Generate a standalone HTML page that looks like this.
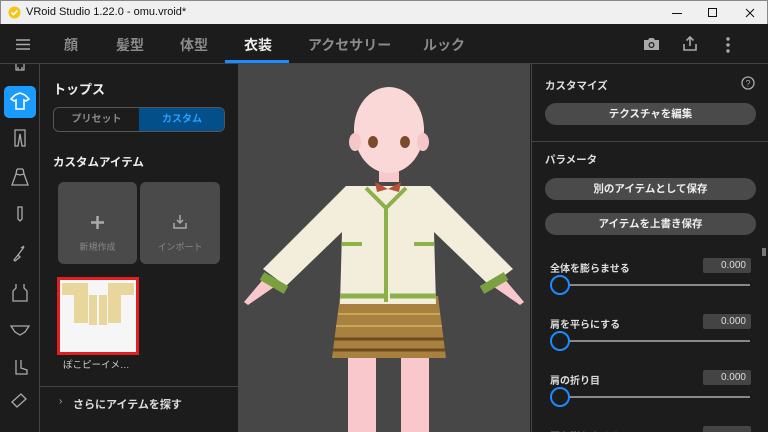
<!DOCTYPE html>
<html><head><meta charset="utf-8"><style>
*{margin:0;padding:0;box-sizing:border-box}
html,body{width:768px;height:432px;overflow:hidden}
body{background:#1c1c1c;font-family:"Liberation Sans","Noto Sans CJK JP",sans-serif;position:relative;color:#ddd}
.abs{position:absolute}
#title{left:0;top:0;width:768px;height:24px;background:#f0f0f0;border:1px solid #888;border-bottom:none}
#title span{position:absolute;left:25px;top:5px;font-size:11px;color:#111}
#nav{left:0;top:24px;width:768px;height:40px;background:#1c1c1c;border-bottom:1px solid #444}
.tab{position:absolute;top:11px;font-size:14px;font-weight:bold;color:#8a8a8a}
#rail{left:0;top:64px;width:40px;height:368px;border-right:1px solid #444}
#lp{left:40px;top:64px;width:198px;height:368px;background:#1c1c1c;overflow:hidden}
#vp{left:238px;top:64px;width:292px;height:368px;background:#474747}
#rp{left:531px;top:64px;width:237px;height:368px;background:#1c1c1c;border-left:1px solid #444;overflow:hidden}
.btn{position:absolute;left:13px;width:211px;height:22px;border-radius:11px;background:#4a4a4a;color:#eee;font-size:10.5px;font-weight:bold;text-align:center;line-height:22px}
.lab{position:absolute;left:18px;font-size:10px;font-weight:bold;color:#ddd}
.val{position:absolute;left:171px;width:48px;height:15px;background:#444;border-radius:2px;font-size:10px;color:#ddd;text-align:right;padding-right:5px;line-height:15px}
.trk{position:absolute;left:28px;width:190px;height:2px;background:#888}
.knob{position:absolute;left:18px;width:20px;height:20px;border:2px solid #1a8cff;border-radius:50%;background:#1c1c1c}
</style></head><body>
<div id="title" class="abs">
<svg class="abs" style="left:7px;top:5px" width="13" height="13"><circle cx="6.5" cy="6.5" r="6" fill="#f5c518"/><path d="M3.5 6.5l2 2 4-4" stroke="#fff" stroke-width="1.6" fill="none"/></svg>
<span>VRoid Studio 1.22.0 - omu.vroid*</span>
<div class="abs" style="left:671px;top:12px;width:10px;height:1px;background:#111"></div>
<div class="abs" style="left:707px;top:7px;width:9px;height:9px;border:1px solid #111"></div>
<svg class="abs" style="left:744px;top:7px" width="10" height="10"><path d="M1 1l8 8M9 1l-8 8" stroke="#111" stroke-width="1"/></svg>
</div>
<div id="nav" class="abs">
<svg class="abs" style="left:16px;top:15px" width="14" height="11"><path d="M0 1h14M0 5.5h14M0 10h14" stroke="#aaa" stroke-width="1.5"/></svg>
<span class="tab" style="left:64px">顔</span>
<span class="tab" style="left:116px">髪型</span>
<span class="tab" style="left:180px">体型</span>
<span class="tab" style="left:244px;color:#eee">衣装</span>
<span class="tab" style="left:308px">アクセサリー</span>
<span class="tab" style="left:423px">ルック</span>
<div class="abs" style="left:225px;top:36px;width:64px;height:3px;background:#1a8cff"></div>
<svg class="abs" style="left:643px;top:13px" width="17" height="14"><path d="M1 3h4l1.5-2h4L12 3h4v10H1z" fill="#aaa"/><circle cx="8.5" cy="8" r="3" fill="#1c1c1c"/><circle cx="8.5" cy="8" r="1.8" fill="#aaa"/></svg>
<svg class="abs" style="left:683px;top:12px" width="14" height="15"><path d="M7 1v9M3.5 4.5L7 1l3.5 3.5M1 8v6h12V8" stroke="#aaa" stroke-width="1.6" fill="none"/></svg>
<svg class="abs" style="left:725px;top:13px" width="6" height="16"><circle cx="3" cy="2" r="1.7" fill="#aaa"/><circle cx="3" cy="8" r="1.7" fill="#aaa"/><circle cx="3" cy="14" r="1.7" fill="#aaa"/></svg>
</div>
<div id="rail" class="abs">
<svg class="abs" style="left:0;top:0" width="40" height="368" fill="none" stroke="#aaa" stroke-width="1.3">
<path d="M16 0v6h8V0M18 3v3M22 3v3"/>
<rect x="4" y="22" width="32" height="32" rx="5" fill="#1a9bff" stroke="none"/>
<path d="M15 31l5-2 5 2 4 4-3 2-2-1v9h-8v-9l-2 1-3-2z" stroke="#fff" stroke-width="1.6"/>
<path d="M15 66h10v16h-3l-2-12-2 12h-3z"/>
<path d="M17 105h6M17 105l-1 5 4 1 4-1-1-5M16 110l-4 11h16l-4-11"/>
<path d="M18 143h4v12l-2 2-2-2z"/>
<path d="M24 183l-6 8M14 196l4-5 2 2-5 4zM21 184l3-2"/>
<path d="M16 220v4l-3 3v10h14v-10l-3-3v-4"/>
<path d="M11 262h18l-4 6-5 3-5-3z"/>
<path d="M16 296v14h11v-4l-6-2v-8"/>
<path d="M12 338l9-8 5 5-9 8zM14 340l2 2"/>
</svg>
</div>
<div id="lp" class="abs">
<div class="abs" style="left:13px;top:15px;font-size:13px;font-weight:bold;color:#eee">トップス</div>
<div class="abs" style="left:13px;top:43px;width:172px;height:25px;border:1px solid #555;border-radius:6px;overflow:hidden">
<div class="abs" style="left:0;top:0;width:85px;height:23px;text-align:center;line-height:23px;font-size:10px;font-weight:bold;color:#888">プリセット</div>
<div class="abs" style="left:85px;top:0;width:86px;height:23px;background:#024f8a;text-align:center;line-height:23px;font-size:10px;font-weight:bold;color:#2aa0ff">カスタム</div>
</div>
<div class="abs" style="left:13px;top:90px;font-size:11.5px;font-weight:bold;color:#eee">カスタムアイテム</div>
<div class="abs" style="left:18px;top:118px;width:79px;height:82px;background:#4a4a4a;border-radius:6px"></div>
<div class="abs" style="left:100px;top:118px;width:80px;height:82px;background:#4a4a4a;border-radius:6px"></div>
<svg class="abs" style="left:51px;top:152px" width="13" height="13"><path d="M6.5 0v13M0 6.5h13" stroke="#aaa" stroke-width="2.5"/></svg>
<svg class="abs" style="left:133px;top:151px" width="14" height="14"><path d="M7 0v8M4 5l3 3 3-3M1 8v5h12V8" stroke="#aaa" stroke-width="1.5" fill="none"/></svg>
<div class="abs" style="left:18px;top:176px;width:79px;text-align:center;font-size:9px;color:#888">新規作成</div>
<div class="abs" style="left:100px;top:176px;width:80px;text-align:center;font-size:9px;color:#888">インポート</div>
<div class="abs" style="left:17px;top:213px;width:82px;height:78px;border:3px solid #e0201e;background:#f6f6f6"></div>
<svg class="abs" style="left:20px;top:216px" width="76" height="72"><g fill="#e8d69c"><rect x="2" y="3" width="26" height="12"/><rect x="48" y="3" width="26" height="12"/><rect x="14" y="15" width="14" height="28"/><rect x="29" y="15" width="8" height="30"/><rect x="39" y="15" width="8" height="30"/><rect x="48" y="15" width="13" height="28"/></g></svg>
<div class="abs" style="left:23px;top:293px;font-size:9.5px;color:#ccc">ぽこピーイメ…</div>
<div class="abs" style="left:0;top:322px;width:198px;height:1px;background:#444"></div>
<div class="abs" style="left:19px;top:332px;font-size:10px;color:#aaa">›</div>
<div class="abs" style="left:33px;top:332px;font-size:11px;font-weight:bold;color:#ddd">さらにアイテムを探す</div>
</div>
<div id="vp" class="abs">
<svg width="292" height="368">
<g fill="#f8c8cc">
<path d="M28 212L6 238l4 3 26-18z"/><path d="M264 212l22 26-4 3-26-18z"/>
<rect x="110" y="290" width="28" height="80"/><rect x="163" y="290" width="28" height="80"/>
</g>
<path d="M102 232h98l8 62H94z" fill="#a88040"/>
<path d="M96 275h110M95 286h112" stroke="#6e4a1e" stroke-width="3"/>
<path d="M100 250h102M98 262h106" stroke="#d4c060" stroke-width="1.2"/>
<path d="M108 122L192 122 200 130 275 205 252 222 196 168 198 240 102 240 104 168 48 222 25 205 100 130z" fill="#f3eedb"/>
<path d="M24 212l24 14M268 212l-24 14" stroke="#7aa040" stroke-width="9"/>
<path d="M128 124l20 20 20-20M148 144v94" stroke="#8cb04a" stroke-width="4" fill="none"/>
<path d="M102 232h46M152 232h46" stroke="#8cb04a" stroke-width="5"/>
<path d="M104 180h20M176 180h20" stroke="#8cb04a" stroke-width="4"/>
<path d="M137 118l13 7 13-7-2 10-11-3-11 3z" fill="#b8503a"/>
<rect x="141" y="100" width="20" height="18" fill="#f8c8cc"/>
<ellipse cx="151" cy="66" rx="35" ry="43" fill="#fbd8d8"/>
<ellipse cx="117" cy="78" rx="6" ry="9" fill="#f6c6c8"/><ellipse cx="185" cy="78" rx="6" ry="9" fill="#f6c6c8"/>
<ellipse cx="135" cy="78" rx="5" ry="6" fill="#7a4a2a"/><ellipse cx="167" cy="78" rx="5" ry="6" fill="#7a4a2a"/>
</svg>
</div>
<div id="rp" class="abs">
<div class="abs" style="left:13px;top:14px;font-size:10.5px;font-weight:bold;color:#ddd">カスタマイズ</div>
<svg class="abs" style="left:209px;top:12px" width="14" height="14"><circle cx="7" cy="7" r="6" stroke="#aaa" stroke-width="1.3" fill="none"/><text x="7" y="10.5" font-size="9" fill="#aaa" text-anchor="middle" font-family="Liberation Sans">?</text></svg>
<div class="btn" style="top:39px">テクスチャを編集</div>
<div class="abs" style="left:0;top:77px;width:237px;height:1px;background:#444"></div>
<div class="abs" style="left:13px;top:88px;font-size:10.5px;font-weight:bold;color:#ddd">パラメータ</div>
<div class="btn" style="top:114px">別のアイテムとして保存</div>
<div class="btn" style="top:149px">アイテムを上書き保存</div>
<div class="abs" style="left:230px;top:184px;width:4px;height:8px;background:#777"></div>
<div class="lab" style="top:196px">全体を膨らませる</div><div class="val" style="top:194px">0.000</div>
<div class="trk" style="top:220px"></div><div class="knob" style="top:211px"></div>
<div class="lab" style="top:252px">肩を平らにする</div><div class="val" style="top:250px">0.000</div>
<div class="trk" style="top:276px"></div><div class="knob" style="top:267px"></div>
<div class="lab" style="top:308px">肩の折り目</div><div class="val" style="top:306px">0.000</div>
<div class="trk" style="top:332px"></div><div class="knob" style="top:323px"></div>
<div class="lab" style="top:364px;color:#777">肩を膨らませる</div><div class="val" style="top:362px"></div>
</div>
</body></html>
